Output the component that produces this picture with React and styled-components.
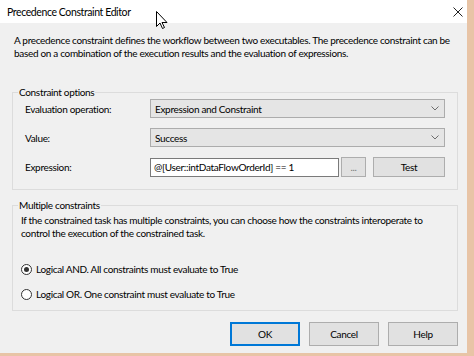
import styled, { createGlobalStyle } from "styled-components";

const GlobalStyle = createGlobalStyle`
  html, body {
    margin: 0;
    padding: 0;
    background: #e8c4a6;
  }
  body {
    font-family: Lato, "Noto Sans", sans-serif;
    font-size: 10px;
    letter-spacing: -0.32px;
    color: #000;
  }
`;

const Window = styled.div`
  position: relative;
  width: 467px;
  height: 353px;
  background: #f0f0f0;
  display: flex;
  flex-direction: column;
`;

const TitleBar = styled.div`
  height: 23px;
  background: #fff;
  display: flex;
  align-items: center;
  justify-content: space-between;
  padding: 0 2px 0 7px;
  font-size: 10.5px;
  letter-spacing: -0.4px;
`;

const CloseButton = styled.div`
  width: 12px;
  height: 12px;
  margin-right: 1px;
  display: flex;
  align-items: center;
  justify-content: center;
`;

const Cursor = styled.svg`
  position: absolute;
  left: 156px;
  top: 11px;
`;

const Body = styled.div`
  padding: 11px 9px 0 12px;
  display: flex;
  flex-direction: column;
`;

const Description = styled.p`
  margin: 0 0 25px 2px;
  line-height: 13px;
`;

const Group = styled.fieldset`
  margin: 0;
  padding: ${(p) => p.$pad || "0 12px 13px 12px"};
  border: 1px solid #dcdcdc;
  min-width: 0;
`;

const Legend = styled.legend`
  padding: 0 1px;
  margin-left: -7px;
  line-height: 14px;
`;

const Row = styled.div`
  display: grid;
  grid-template-columns: 125px 1fr;
  align-items: center;
  height: 19px;
  margin-top: ${(p) => (p.$first ? "0" : "10px")};
`;

const Select = styled.div`
  height: 19px;
  box-sizing: border-box;
  background: #e5e5e5;
  border: 1px solid #acacac;
  display: flex;
  align-items: center;
  justify-content: space-between;
  padding: 0 5px 0 4px;
`;

const ExpressionRow = styled.div`
  display: flex;
  align-items: center;
  gap: 2px;
`;

const Input = styled.div`
  width: 189px;
  height: 19px;
  box-sizing: border-box;
  background: #fff;
  border: 1px solid #7a7a7a;
  display: flex;
  align-items: center;
  padding-left: 3px;
`;

const Button = styled.div`
  width: ${(p) => p.$w || 70}px;
  height: ${(p) => p.$h || 24}px;
  box-sizing: border-box;
  background: #e1e1e1;
  border: ${(p) => (p.$primary ? "2px solid #0078d7" : "1px solid #adadad")};
  display: flex;
  align-items: center;
  justify-content: center;
  margin-left: ${(p) => p.$ml || 0}px;
  color: ${(p) => p.$dim || "#000"};
`;

const GroupText = styled.p`
  margin: 2px 0 21px -4px;
  line-height: 13px;
`;

const RadioRow = styled.label`
  display: flex;
  align-items: center;
  gap: 4px;
  height: 16px;
  margin-top: ${(p) => (p.$first ? "0" : "9px")};
  margin-left: -4px;
`;

const RadioCircle = styled.span`
  width: 11px;
  height: 11px;
  box-sizing: border-box;
  border-radius: 50%;
  border: 1px solid #333;
  background: #fff;
  display: flex;
  align-items: center;
  justify-content: center;

  &::after {
    content: "";
    width: 5px;
    height: 5px;
    border-radius: 50%;
    background: ${(p) => (p.$checked ? "#333" : "transparent")};
  }
`;

const Footer = styled.div`
  display: flex;
  justify-content: flex-end;
  gap: 9px;
  margin-top: 11px;
`;

const Chevron = () => (
  <svg width="8" height="5" viewBox="0 0 8 5">
    <path d="M0.5 0.5 L4 4 L7.5 0.5" fill="none" stroke="#6d6d6d" strokeWidth="1" />
  </svg>
);

const Spacer = styled.div`
  height: 8px;
`;

const App = () => {
  return (
    <>
      <GlobalStyle />
      <Window>
        <TitleBar>
          <span>Precedence Constraint Editor</span>
          <CloseButton>
            <svg width="10" height="10" viewBox="0 0 10 10">
              <path d="M0.5 0.5 L9.5 9.5 M9.5 0.5 L0.5 9.5" stroke="#222" strokeWidth="1" />
            </svg>
          </CloseButton>
        </TitleBar>
        <Cursor width="12" height="19" viewBox="0 0 12 19">
          <path
            d="M0.5 0.5 L0.5 15.5 L4 12 L6.5 17.5 L8.5 16.5 L6 11.5 L11 11.5 Z"
            fill="#fff"
            stroke="#000"
            strokeWidth="1"
            strokeLinejoin="round"
          />
        </Cursor>
        <Body>
          <Description>
            A precedence constraint defines the workflow between two executables. The precedence constraint can be
            based on a combination of the execution results and the evaluation of expressions.
          </Description>

          <Group>
            <Legend>Constraint options</Legend>
            <Row $first>
              <span>Evaluation operation:</span>
              <Select>
                <span>Expression and Constraint</span>
                <Chevron />
              </Select>
            </Row>
            <Row>
              <span>Value:</span>
              <Select>
                <span>Success</span>
                <Chevron />
              </Select>
            </Row>
            <Row>
              <span>Expression:</span>
              <ExpressionRow>
                <Input>@[User::intDataFlowOrderId] == 1</Input>
                <Button $w={25} $h={20} $dim="#777">...</Button>
                <Button $w={72} $h={20} $ml={5}>Test</Button>
              </ExpressionRow>
            </Row>
          </Group>

          <Spacer />

          <Group $pad="0 12px 8px 12px">
            <Legend>Multiple constraints</Legend>
            <GroupText>
              If the constrained task has multiple constraints, you can choose how the constraints interoperate to
              control the execution of the constrained task.
            </GroupText>
            <RadioRow $first>
              <RadioCircle $checked />
              <span>Logical AND. All constraints must evaluate to True</span>
            </RadioRow>
            <RadioRow>
              <RadioCircle />
              <span>Logical OR. One constraint must evaluate to True</span>
            </RadioRow>
          </Group>

          <Footer>
            <Button $primary>OK</Button>
            <Button>Cancel</Button>
            <Button>Help</Button>
          </Footer>
        </Body>
      </Window>
    </>
  );
};

export default App;
